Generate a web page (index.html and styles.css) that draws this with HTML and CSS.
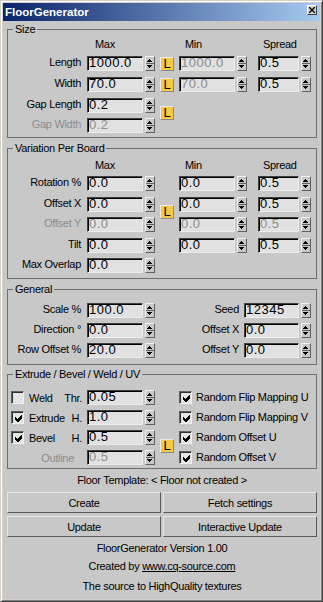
FILE: index.html
```html
<!DOCTYPE html>
<html lang="en">
    <head>
        <meta charset="utf-8"/>
        <title>FloorGenerator</title>
        <link rel="stylesheet" href="styles.css">
    </head>
    <body>
        <div class="window">
            <!-- Title bar -->
            <div class="titlebar">
                <span class="title">FloorGenerator</span>
                <span class="close"><svg width="6" height="6" viewBox="0 0 6 6"><path d="M0 0L6 6M6 0L0 6" stroke="#000" stroke-width="1.3"/></svg></span>
            </div>

            <div class="client">
                <!-- Size -->
                <fieldset class="group size">
                    <legend>Size</legend>
                    <div class="grid board">
                        <span class="head c2 max">Max</span>
                        <span class="head c4 min">Min</span>
                        <span class="head c5 spread">Spread</span>

                        <span class="lbl c1">Length</span>
                        <div class="spin c2"><span class="edit">1000.0</span><span class="arrows"></span></div>
                        <span class="lock c3">L</span>
                        <div class="spin c4 off"><span class="edit">1000.0</span><span class="arrows"></span></div>
                        <div class="spin c5"><span class="edit short">0.5</span><span class="arrows"></span></div>

                        <span class="lbl c1">Width</span>
                        <div class="spin c2"><span class="edit">70.0</span><span class="arrows"></span></div>
                        <span class="lock c3">L</span>
                        <div class="spin c4 off"><span class="edit">70.0</span><span class="arrows"></span></div>
                        <div class="spin c5"><span class="edit short">0.5</span><span class="arrows"></span></div>

                        <span class="lbl c1">Gap Length</span>
                        <div class="spin c2"><span class="edit">0.2</span><span class="arrows"></span></div>
                        <span class="lock c3 span2">L</span>

                        <span class="lbl c1 off">Gap Width</span>
                        <div class="spin c2 off"><span class="edit">0.2</span><span class="arrows"></span></div>
                    </div>
                </fieldset>

                <!-- Variation -->
                <fieldset class="group variation">
                    <legend>Variation Per Board</legend>
                    <div class="grid board">
                        <span class="head c2 max">Max</span>
                        <span class="head c4 min">Min</span>
                        <span class="head c5 spread">Spread</span>

                        <span class="lbl c1">Rotation %</span>
                        <div class="spin c2"><span class="edit">0.0</span><span class="arrows"></span></div>
                        <div class="spin c4"><span class="edit">0.0</span><span class="arrows"></span></div>
                        <div class="spin c5"><span class="edit short">0.5</span><span class="arrows"></span></div>

                        <span class="lbl c1">Offset X</span>
                        <div class="spin c2"><span class="edit">0.0</span><span class="arrows"></span></div>
                        <span class="lock c3 span2">L</span>
                        <div class="spin c4"><span class="edit">0.0</span><span class="arrows"></span></div>
                        <div class="spin c5"><span class="edit short">0.5</span><span class="arrows"></span></div>

                        <span class="lbl c1 off">Offset Y</span>
                        <div class="spin c2 off"><span class="edit">0.0</span><span class="arrows"></span></div>
                        <div class="spin c4 off"><span class="edit">0.0</span><span class="arrows"></span></div>
                        <div class="spin c5 off"><span class="edit short">0.5</span><span class="arrows"></span></div>

                        <span class="lbl c1">Tilt</span>
                        <div class="spin c2"><span class="edit">0.0</span><span class="arrows"></span></div>
                        <div class="spin c4"><span class="edit">0.0</span><span class="arrows"></span></div>
                        <div class="spin c5"><span class="edit short">0.5</span><span class="arrows"></span></div>

                        <span class="lbl c1">Max Overlap</span>
                        <div class="spin c2"><span class="edit">0.0</span><span class="arrows"></span></div>
                    </div>
                </fieldset>

                <!-- General -->
                <fieldset class="group general">
                    <legend>General</legend>
                    <div class="grid gen">
                        <span class="lbl c1">Scale %</span>
                        <div class="spin c2"><span class="edit">100.0</span><span class="arrows"></span></div>
                        <span class="lbl c3">Seed</span>
                        <div class="spin c4"><span class="edit seed">12345</span><span class="arrows"></span></div>

                        <span class="lbl c1">Direction °</span>
                        <div class="spin c2"><span class="edit">0.0</span><span class="arrows"></span></div>
                        <span class="lbl c3">Offset X</span>
                        <div class="spin c4"><span class="edit seed">0.0</span><span class="arrows"></span></div>

                        <span class="lbl c1">Row Offset %</span>
                        <div class="spin c2"><span class="edit">20.0</span><span class="arrows"></span></div>
                        <span class="lbl c3">Offset Y</span>
                        <div class="spin c4"><span class="edit seed">0.0</span><span class="arrows"></span></div>
                    </div>
                </fieldset>

                <!-- Extrude -->
                <fieldset class="group extrude">
                    <legend>Extrude / Bevel / Weld / UV</legend>
                    <div class="grid ext">
                        <span class="check c1"></span>
                        <span class="name c2"><span>Weld</span><span>Thr.</span></span>
                        <div class="spin c3"><span class="edit">0.05</span><span class="arrows"></span></div>
                        <label class="opt c5"><span class="check"><svg width="7" height="7" viewBox="0 0 7 7" shape-rendering="crispEdges"><polygon points="0,2 2,4 6,0 7,0 7,3 3,7 2,7 0,5"/></svg></span>Random Flip Mapping U</label>

                        <span class="check c1"><svg width="7" height="7" viewBox="0 0 7 7" shape-rendering="crispEdges"><polygon points="0,2 2,4 6,0 7,0 7,3 3,7 2,7 0,5"/></svg></span>
                        <span class="name c2"><span>Extrude</span><span>H.</span></span>
                        <div class="spin c3"><span class="edit">1.0</span><span class="arrows"></span></div>
                        <label class="opt c5"><span class="check"><svg width="7" height="7" viewBox="0 0 7 7" shape-rendering="crispEdges"><polygon points="0,2 2,4 6,0 7,0 7,3 3,7 2,7 0,5"/></svg></span>Random Flip Mapping V</label>

                        <span class="check c1"><svg width="7" height="7" viewBox="0 0 7 7" shape-rendering="crispEdges"><polygon points="0,2 2,4 6,0 7,0 7,3 3,7 2,7 0,5"/></svg></span>
                        <span class="name c2"><span>Bevel</span><span>H.</span></span>
                        <div class="spin c3"><span class="edit">0.5</span><span class="arrows"></span></div>
                        <span class="lock c4 span2">L</span>
                        <label class="opt c5"><span class="check"><svg width="7" height="7" viewBox="0 0 7 7" shape-rendering="crispEdges"><polygon points="0,2 2,4 6,0 7,0 7,3 3,7 2,7 0,5"/></svg></span>Random Offset U</label>

                        <span class="lbl outline off">Outline</span>
                        <div class="spin c3 off"><span class="edit">0.5</span><span class="arrows"></span></div>
                        <label class="opt c5"><span class="check"><svg width="7" height="7" viewBox="0 0 7 7" shape-rendering="crispEdges"><polygon points="0,2 2,4 6,0 7,0 7,3 3,7 2,7 0,5"/></svg></span>Random Offset V</label>
                    </div>
                </fieldset>

                <div class="template">Floor Template: &lt; Floor not created &gt;</div>

                <div class="buttons">
                    <button>Create</button>
                    <button>Fetch settings</button>
                    <button>Update</button>
                    <button>Interactive Update</button>
                </div>

                <p class="info version">FloorGenerator Version 1.00</p>
                <p class="info created">Created by <a href="#">www.cq-source.com</a></p>
                <p class="info source">The source to HighQuality textures</p>
            </div>
        </div>
    </body>
</html>
```

FILE: styles.css
```css
body {
    margin: 0;
    font: 11px "Liberation Sans", Arial, sans-serif;
    letter-spacing: -0.3px;
    color: #000;
}

.window {
    width: 323px;
    height: 602px;
    box-sizing: border-box;
    border: 1px solid;
    border-color: #d4d0c8 #404040 #404040 #d4d0c8;
    box-shadow: inset 1px 1px 0 #fff, inset -1px -1px 0 #808080;
    padding: 2px;
    background: #d4d0c8;
    display: flex;
    flex-direction: column;
}

/* title bar */
.titlebar {
    height: 18px;
    display: flex;
    justify-content: space-between;
    align-items: flex-start;
    padding: 0 3px 0 2px;
    background: linear-gradient(to right, #0a246a, #a6caf0);
}
.title {
    color: #fff;
    font-weight: bold;
    font-size: 11.5px;
    letter-spacing: 0;
    line-height: 18px;
}
.close {
    margin-top: 2px;
    width: 10px;
    height: 10px;
    box-sizing: border-box;
    border: 1px solid;
    border-color: #fff #404040 #404040 #fff;
    background: #d4d0c8;
    display: flex;
    align-items: center;
    justify-content: center;
}

.client {
    flex: 1;
    background: #c8c8c8;
    padding: 2px 3px 0 4px;
}

/* group boxes */
.group {
    margin: 0;
    padding: 0;
    width: 310px;
    box-sizing: border-box;
    border: 1px solid #6e6e6e;
    min-width: 0;
}
.group legend {
    margin-left: 5px;
    padding: 0 2px;
    line-height: 13px;
}
.variation { margin-top: 4px; padding: 3.5px 0 5px; }
.size { padding: 2.25px 0 3.75px; }
.general { margin-top: 4px; padding: 7px 0 6px; }
.extrude { margin-top: 3px; padding: 9px 0 3px; }

.grid {
    display: grid;
    grid-auto-rows: 15px;
}
.board {
    grid-template-columns: 79px 73px 19px 79px 53px;
    grid-template-rows: 12px;
}
.size .board { row-gap: 5.75px; }
.variation .board { row-gap: 5.5px; }
.gen {
    grid-template-columns: 79px 73px 84px 67px;
    row-gap: 5px;
}
.ext {
    grid-template-columns: 21px 58px 73px 19px 1fr;
    row-gap: 5px;
}

.c1 { grid-column: 1; }
.c2 { grid-column: 2; }
.c3 { grid-column: 3; }
.c4 { grid-column: 4; }
.c5 { grid-column: 5; }
.span2 { grid-row: span 2; }

.head { line-height: 12px; }
.max { padding-left: 8px; }
.min { padding-left: 6px; }
.spread { padding-left: 5px; }

.lbl {
    text-align: right;
    padding-right: 6px;
    line-height: 13px;
    white-space: nowrap;
}
.gen .c3 { padding-right: 5px; }
.off, .off .edit { color: #8c8c8c; }

/* spinner */
.spin {
    display: flex;
    gap: 2px;
}
.edit {
    width: 56px;
    height: 15px;
    box-sizing: border-box;
    border: 1px solid;
    border-color: #404040 #ececec #ececec #404040;
    box-shadow: inset 1px 1px 0 #000;
    background: #e1e1e1;
    padding-left: 1px;
    font-size: 13px;
    letter-spacing: 0.5px;
    line-height: 12px;
    white-space: nowrap;
}
.edit.short { width: 41px; }
.edit.seed { width: 55px; }

.arrows {
    width: 10px;
    height: 15px;
    box-sizing: border-box;
    border: 1px solid;
    border-color: #f2f2f2 #606060 #606060 #f2f2f2;
    background: linear-gradient(to bottom, transparent 6px, #606060 6px, #606060 7px, transparent 7px);
    display: flex;
    flex-direction: column;
    justify-content: space-between;
    align-items: flex-start;
    padding: 2px 0 2px 3px;
}
.arrows::before,
.arrows::after {
    content: "";
    width: 1px;
    height: 1px;
    background: #000;
}
.arrows::before {
    box-shadow: -1px 1px #000, 0 1px #000, 1px 1px #000,
        -2px 2px #000, -1px 2px #000, 0 2px #000, 1px 2px #000, 2px 2px #000;
}
.arrows::after {
    box-shadow: -1px -1px #000, 0 -1px #000, 1px -1px #000,
        -2px -2px #000, -1px -2px #000, 0 -2px #000, 1px -2px #000, 2px -2px #000;
}

/* lock toggle */
.lock {
    width: 14px;
    height: 14px;
    box-sizing: border-box;
    align-self: end;
    border: 1px solid;
    border-color: #ececec #8a8a8a #8a8a8a #ececec;
    background: #f6c843;
    font-size: 13px;
    letter-spacing: 0;
    line-height: 12px;
    text-align: center;
}
.lock.span2 {
    align-self: center;
    margin-bottom: 4px;
}

/* checkboxes */
.check {
    width: 13px;
    height: 13px;
    box-sizing: border-box;
    border: 1px solid;
    border-color: #606060 #f0f0f0 #f0f0f0 #606060;
    box-shadow: inset 1px 1px 0 #303030;
    background: #e4e4e4;
    display: flex;
    align-items: center;
    justify-content: center;
    padding: 1px 0 0 1px;
}
.ext > .check {
    margin: 1px 0 0 3px;
}
.name {
    display: flex;
    justify-content: space-between;
    padding-right: 5px;
    line-height: 17px;
}
.outline {
    grid-column: 1 / span 2;
    padding-right: 13px;
    line-height: 17px;
}
.opt {
    display: flex;
    align-items: center;
    gap: 4px;
    line-height: 15px;
    white-space: nowrap;
}

/* bottom area */
.template {
    margin-top: 4px;
    text-align: center;
    line-height: 15px;
}
.buttons {
    margin-top: 4px;
    width: 310px;
    display: grid;
    grid-template-columns: 154px 154px;
    column-gap: 2px;
    row-gap: 3px;
}
.buttons button {
    height: 21px;
    margin: 0;
    padding: 0;
    font: inherit;
    letter-spacing: inherit;
    color: #000;
    background: #c8c8c8;
    border: 1px solid;
    border-color: #e6e6e6 #5a5a5a #5a5a5a #e6e6e6;
}

.info {
    margin: 0;
    text-align: center;
    line-height: 15px;
}
.version { margin-top: 4px; }
.created { margin-top: 3px; }
.source { margin-top: 5px; }
.info a {
    color: #000;
}
```
